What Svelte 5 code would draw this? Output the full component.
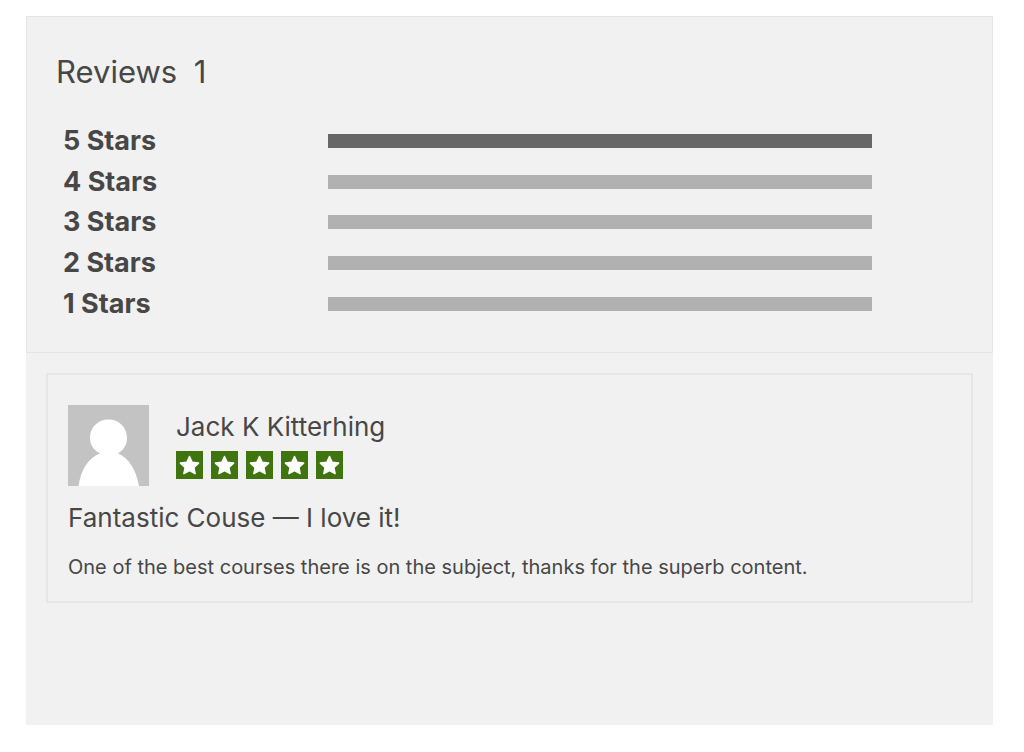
<script>
    let name = 'Jack K Kitterhing'
    let total = 1
    let rating = 5

    let rows = [
        { stars: 5, percent: 100 },
        { stars: 4, percent: 0 },
        { stars: 3, percent: 0 },
        { stars: 2, percent: 0 },
        { stars: 1, percent: 0 }
    ]
</script>

<main class="panel">
    <section class="summary">
        <h2>Reviews <span>{total}</span></h2>
        <div class="rows">
            {#each rows as row}
                <div class="row">
                    <span class="label">{row.stars} Stars</span>
                    <div class="bar">
                        <div class="fill" style="width: {row.percent}%"></div>
                    </div>
                </div>
            {/each}
        </div>
    </section>

    <article class="review">
        <header>
            <svg class="avatar" viewBox="0 0 81 81" role="img" aria-label={name}>
                <rect width="81" height="81" fill="#c3c3c3" />
                <path d="M10.500 81C13 65 20 53 32 48.500C25.500 45 22 40 22 33C22 22 30 14.500 40.500 14.500C51 14.500 59 22 59 33C59 40 55.500 45 50 48.500C61 53 68 65 71 81Z" fill="#fff" />
            </svg>
            <div class="author">
                <h3>{name}</h3>
                <div class="stars" role="img" aria-label="{rating} out of 5">
                    {#each Array(rating) as _}
                        <svg viewBox="0 0 27 28">
                            <rect width="27" height="28" fill="#40740f" />
                            <path d="M13.500 5.500L16.200 11.300L22.600 12.100L17.900 16.400L19.100 22.700L13.500 19.600L7.900 22.700L9.100 16.400L4.400 12.100L10.800 11.300Z" fill="#fff" stroke="#fff" stroke-width="1.500" stroke-linejoin="round" />
                        </svg>
                    {/each}
                </div>
            </div>
        </header>
        <h4>Fantastic Couse — I love it!</h4>
        <p>One of the best courses there is on the subject, thanks for the superb content.</p>
    </article>
</main>

<style>
    :global(body){
        margin: 0;
        background: #fff;
    }
    h2, h3, h4, p{
        margin: 0;
        font-weight: 400;
    }
    .panel{
        box-sizing: border-box;
        margin: 16px 31px 24px 26px;
        padding-bottom: 122px;
        background: #f1f1f1;
        color: #474747;
        font-family: Inter, "Liberation Sans", sans-serif;
    }
    .summary{
        padding: 35px 120px 28px 29px;
        border: 1px solid #e5e5e5;
    }
    h2{
        font-size: 31px;
        line-height: 40px;
    }
    h2 span{
        margin-left: 8px;
    }
    .rows{
        display: grid;
        grid-template-rows: repeat(5, 1fr);
        min-height: 203px;
        margin-top: 29px;
        padding-left: 7px;
    }
    .row{
        display: grid;
        grid-template-columns: 265px 1fr;
        align-items: center;
    }
    .label{
        font-size: 27px;
        line-height: 40px;
        font-weight: 700;
    }
    .bar{
        height: 14px;
        background: #b1b1b1;
    }
    .fill{
        height: 100%;
        background: #676767;
    }
    .review{
        margin: 20px 20px 0;
        padding: 30px 20px 19px;
        border: 2px solid #e6e6e6;
    }
    header{
        display: flex;
        gap: 27px;
    }
    .avatar{
        width: 81px;
        height: 81px;
    }
    h3, h4{
        font-size: 26px;
        line-height: 32px;
    }
    .author{
        padding-top: 6px;
    }
    .stars{
        display: flex;
        gap: 8px;
        margin-top: 8px;
    }
    .stars svg{
        width: 27px;
        height: 28px;
    }
    h4{
        margin-top: 16px;
    }
    p{
        margin-top: 18px;
        font-size: 20px;
        line-height: 30px;
    }
</style>
